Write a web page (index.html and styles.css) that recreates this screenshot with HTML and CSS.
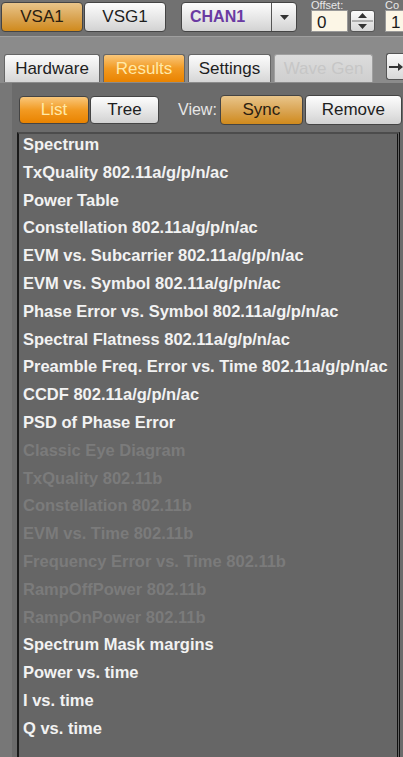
FILE: index.html
```html
<!DOCTYPE html>
<html lang="en">

<head>
    <meta charset="UTF-8">
    <meta name="viewport" content="width=device-width, initial-scale=1.0">
    <title>Results</title>
    <link rel="stylesheet" href="styles.css">
</head>

<body>
    <div id="khung-tren">
        <button class="btn btn-tan btn-vsa">VSA1</button>
        <button class="btn btn-vsg">VSG1</button>
        <div class="chan">
            <span class="chan-ten">CHAN1</span>
            <span class="chan-mui">
                <svg width="9" height="5" viewBox="0 0 9 5"><path d="M0 0h9L4.5 5z" fill="#333"/></svg>
            </span>
        </div>
        <div class="o-nhap">
            <span class="nhan">Offset:</span>
            <div class="hang-nhap">
                <span class="gia-tri">0</span>
                <span class="spin">
                    <svg width="25" height="24" viewBox="0 0 25 24">
                        <path d="M8 9h9L12.5 4z M8 15h9L12.5 20z" fill="#333"/>
                        <line x1="2" y1="12" x2="23" y2="12" stroke="#777"/>
                    </svg>
                </span>
            </div>
        </div>
        <div class="o-nhap o-co">
            <span class="nhan">Co</span>
            <div class="hang-nhap">
                <span class="gia-tri">1</span>
            </div>
        </div>
    </div>

    <div id="thanh-tab">
        <button class="tab">Hardware</button>
        <button class="tab tab-chon">Results</button>
        <button class="tab">Settings</button>
        <button class="tab tab-tat">Wave Gen</button>
        <button class="tab-mui">
            <svg width="16" height="10" viewBox="0 0 16 10"><path d="M0 4h9V1l5 4-5 4V6H0z" fill="#333"/></svg>
        </button>
    </div>

    <div id="khung-giua">
        <div class="thanh-cong-cu">
            <div class="nhom">
                <button class="btn btn-cam btn-list">List</button>
                <button class="btn btn-tree">Tree</button>
            </div>
            <span class="view">View:</span>
            <button class="btn btn-tan btn-sync">Sync</button>
            <button class="btn btn-remove">Remove</button>
        </div>

        <ul class="ds-ket-qua">
            <li>Spectrum</li>
            <li>TxQuality 802.11a/g/p/n/ac</li>
            <li>Power Table</li>
            <li>Constellation 802.11a/g/p/n/ac</li>
            <li>EVM vs. Subcarrier 802.11a/g/p/n/ac</li>
            <li>EVM vs. Symbol 802.11a/g/p/n/ac</li>
            <li>Phase Error vs. Symbol 802.11a/g/p/n/ac</li>
            <li>Spectral Flatness 802.11a/g/p/n/ac</li>
            <li>Preamble Freq. Error vs. Time 802.11a/g/p/n/ac</li>
            <li>CCDF 802.11a/g/p/n/ac</li>
            <li>PSD of Phase Error</li>
            <li class="tat">Classic Eye Diagram</li>
            <li class="tat">TxQuality 802.11b</li>
            <li class="tat">Constellation 802.11b</li>
            <li class="tat">EVM vs. Time 802.11b</li>
            <li class="tat">Frequency Error vs. Time 802.11b</li>
            <li class="tat">RampOffPower 802.11b</li>
            <li class="tat">RampOnPower 802.11b</li>
            <li>Spectrum Mask margins</li>
            <li>Power vs. time</li>
            <li>I vs. time</li>
            <li>Q vs. time</li>
        </ul>
    </div>
</body>

</html>
```

FILE: styles.css
```css
* {
    box-sizing: border-box;
    padding: 0;
    margin: 0;
}

body {
    width: 403px;
    height: 757px;
    overflow: hidden;
    background-color: #6b6b6b;
    font-family: "Liberation Sans", Arial, sans-serif;
    font-size: 16px;
    color: #1a1a1a;
}

button {
    font-family: inherit;
    cursor: default;
}

/* thanh tren cung */
#khung-tren {
    display: flex;
    align-items: flex-end;
    height: 36px;
    padding-bottom: 4px;
    background-color: #717171;
    overflow: hidden;
}

#khung-tren > * {
    flex-shrink: 0;
}

.btn {
    height: 30px;
    border: 1px solid #444;
    border-radius: 4px;
    background: linear-gradient(#fdfdfd, #e4e4e4 60%, #d2d2d2);
    font-size: 17px;
    color: #1e1e1e;
}

.btn-tan {
    background: linear-gradient(#e9c58a, #d9a350 55%, #d08a1c);
    color: #2a2010;
}

.btn-cam {
    background: linear-gradient(#f9c77a, #f29a22 50%, #e98300);
    color: #ffe9a8;
}

.btn-vsa {
    width: 82px;
    margin-left: 1px;
}

.btn-vsg {
    width: 82px;
    margin-left: 1px;
}

.chan {
    display: flex;
    margin-left: 15px;
    height: 30px;
    border: 1px solid #444;
    border-radius: 4px;
    background: linear-gradient(#fdfdfd, #e4e4e4 60%, #d2d2d2);
}

.chan-ten {
    width: 90px;
    padding-left: 8px;
    line-height: 28px;
    font-weight: bold;
    font-size: 16px;
    color: #6a3aa2;
    border-right: 1px solid #555;
}

.chan-mui {
    width: 24px;
    display: flex;
    align-items: center;
    justify-content: center;
}

.o-nhap {
    margin-left: 14px;
    display: flex;
    flex-direction: column;
}

.o-co {
    margin-left: 10px;
}

.nhan {
    font-size: 11px;
    line-height: 10px;
    height: 10px;
    color: #e8e8e8;
}

.hang-nhap {
    display: flex;
    gap: 2px;
}

.gia-tri {
    width: 37px;
    height: 22px;
    padding-left: 5px;
    line-height: 24px;
    font-size: 17px;
    background-color: #fcf6e6;
    border: 1px solid #999;
}

.o-co .gia-tri {
    width: 30px;
}

.spin {
    width: 25px;
    height: 22px;
    border: 1px solid #555;
    border-radius: 3px;
    background: linear-gradient(#fafafa, #d6d6d6);
    overflow: hidden;
}

.spin svg {
    display: block;
    margin: -2px -1px;
}

/* hang tab */
#thanh-tab {
    display: flex;
    align-items: flex-end;
    height: 47px;
    padding: 0 0 1px 4px;
    gap: 3px;
    background-color: #8b8b8b;
    border-top: 1px solid #9e9e9e;
    overflow: hidden;
}

#thanh-tab > * {
    flex-shrink: 0;
}

.tab {
    height: 28px;
    border: 1px solid #666;
    border-bottom: none;
    border-radius: 3px 3px 0 0;
    background: linear-gradient(#fcfcfc, #e6e6e6 60%, #d6d6d6);
    font-size: 17px;
    color: #1e1e1e;
}

.tab:nth-child(1) {
    width: 96px;
}

.tab:nth-child(2) {
    width: 82px;
}

.tab:nth-child(3) {
    width: 83px;
}

.tab:nth-child(4) {
    width: 99px;
}

.tab-chon {
    background: linear-gradient(#f9c77a, #f29a22 50%, #e98300);
    color: #ffe9a8;
}

.tab-tat {
    background: linear-gradient(#dcdcdc, #cfcfcf);
    color: #c6c6c6;
    border-color: #a0a0a0;
}

.tab-mui {
    width: 20px;
    height: 27px;
    margin-left: 10px;
    margin-bottom: 2px;
    border: 1px solid #555;
    border-right: none;
    border-radius: 3px 0 0 3px;
    background: linear-gradient(#fafafa, #d8d8d8);
    display: flex;
    align-items: center;
    padding-left: 2px;
}

/* phan giua */
#khung-giua {
    padding: 12px 0 0 0;
    border-left: 12px solid #777;
}

.thanh-cong-cu {
    display: flex;
    align-items: center;
    height: 30px;
}

.thanh-cong-cu > * {
    flex-shrink: 0;
}

.nhom {
    display: flex;
    gap: 1px;
    margin-left: 7px;
}

.btn-list {
    width: 70px;
    height: 28px;
}

.btn-tree {
    width: 69px;
    height: 28px;
}

.view {
    margin-left: 19px;
    font-size: 16px;
    color: #e6e6e6;
}

.btn-sync {
    margin-left: 3px;
    width: 83px;
}

.btn-remove {
    margin-left: 2px;
    width: 97px;
}

.ds-ket-qua {
    list-style: none;
    margin: 7px 0 0 5px;
    width: 383px;
    height: 640px;
    padding: 0 0 0 4px;
    border-left: 2px solid #1a1a1a;
    border-top: 2px solid #4c4c4c;
    border-right: 3px double #111;
    background-color: #666;
}

.ds-ket-qua li {
    height: 27.8px;
    line-height: 27.8px;
    font-weight: bold;
    font-size: 16.5px;
    color: #f2f2f2;
    white-space: nowrap;
}

.ds-ket-qua li:first-child {
    margin-top: -3px;
}

.ds-ket-qua li.tat {
    color: #7b7b7b;
}
```
